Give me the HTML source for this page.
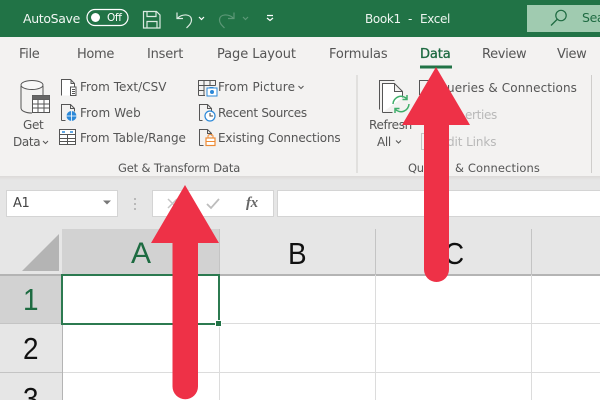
<!DOCTYPE html>
<html><head><meta charset="utf-8">
<style>
html,body{margin:0;padding:0;background:#fff}
#p{position:relative;width:600px;height:400px;overflow:hidden;background:#fff;font-family:"DejaVu Sans","Liberation Sans",sans-serif}
#p span.t{position:absolute;white-space:nowrap;line-height:16px;font-size:12px;color:#555;font-family:"DejaVu Sans",sans-serif;letter-spacing:-.35px;filter:blur(.25px)}
#p span.h{position:absolute;white-space:nowrap;line-height:30px;font-size:31px;color:#111;font-family:"Liberation Sans",sans-serif;transform-origin:0 0;transform:scaleX(.9)}
#p div{position:absolute}
svg{position:absolute;left:0;top:0}
</style></head><body>
<div id="p">
<div style="left:0;top:0;width:600px;height:37px;background:#217346"></div>
<div style="left:0;top:37px;width:600px;height:139px;background:#f3f2f1"></div>
<div style="left:0;top:176px;width:600px;height:4px;background:linear-gradient(#dcdad8,#e6e6e6)"></div>
<div style="left:0;top:180px;width:600px;height:49px;background:#e6e6e6"></div>
<div style="left:527px;top:5px;width:73px;height:27px;background:#a0cbb0"></div>

<!-- formula bar -->
<div style="left:6px;top:190px;width:110px;height:25px;background:#fff;border:1px solid #d4d4d4"></div>
<div style="left:152px;top:190px;width:120px;height:25px;background:#fff;border:1px solid #d4d4d4"></div>
<div style="left:277px;top:190px;width:323px;height:25px;background:#fff;border:1px solid #d4d4d4;border-right:0"></div>

<!-- headers -->
<div style="left:0;top:229px;width:600px;height:46px;background:#e6e6e6"></div>
<div style="left:62px;top:229px;width:157px;height:46px;background:#d2d2d2"></div>
<div style="left:0;top:275px;width:62px;height:48px;background:#d2d2d2"></div>
<div style="left:0;top:323px;width:62px;height:77px;background:#e6e6e6"></div>
<div style="left:0;top:274px;width:600px;height:1.5px;background:#b4b4b4"></div>
<div style="left:62px;top:275px;width:1px;height:125px;background:#b4b4b4"></div>
<div style="left:0;top:372px;width:62px;height:1px;background:#c4c4c4"></div>
<div style="left:0;top:323px;width:62px;height:1px;background:#c4c4c4"></div>
<div style="left:219px;top:229px;width:1px;height:46px;background:#c4c4c4"></div>
<div style="left:375px;top:229px;width:1px;height:46px;background:#c4c4c4"></div>
<div style="left:531px;top:229px;width:1px;height:46px;background:#c4c4c4"></div>
<!-- grid -->
<div style="left:63px;top:323px;width:537px;height:1px;background:#dcdcdc"></div>
<div style="left:63px;top:372px;width:537px;height:1px;background:#dcdcdc"></div>
<div style="left:219px;top:275px;width:1px;height:125px;background:#dcdcdc"></div>
<div style="left:375px;top:275px;width:1px;height:125px;background:#dcdcdc"></div>
<div style="left:531px;top:275px;width:1px;height:125px;background:#dcdcdc"></div>
<!-- selection -->
<div style="left:61px;top:274px;width:155px;height:47px;border:2px solid #2c7a50;background:#fff"></div>
<div style="left:215px;top:320px;width:7px;height:7px;background:#217346;border:1px solid #fff;box-sizing:border-box"></div>

<svg width="600" height="400" viewBox="0 0 600 400" fill="none">
<!-- titlebar -->
<rect x="87" y="9.500" width="41" height="16" rx="8" stroke="#fff" stroke-width="1.200"/>
<circle cx="95.500" cy="17.500" r="4.500" fill="#fff"/>
<g stroke="#dcebe2" stroke-width="1.200">
<path d="M143.500 11.500h13l3.500 3.500v13h-16.500z"/><path d="M147 11.500v5h9v-5M147 28v-6.500h10V28"/>
<path d="M177 12.500v6h6M177.500 18.500c4-5 14-5 14 1.500 0 3-2 5-5 8"/>
</g>
<path d="M199 17l2.500 2.500 2.500-2.500" stroke="#fff" stroke-width="1.200"/>
<g stroke="#5c9877" stroke-width="1.200"><path d="M234 12.500v6h-6M233.500 18.500c-4-5-14-5-14 1.500 0 3 2 5 5 8"/><path d="M243 17l2.500 2.500 2.500-2.500"/></g>
<path d="M267 15.500h6M267 18l3 2.500 3-2.500" stroke="#fff" stroke-width="1.200"/>
<circle cx="561" cy="15.500" r="5.200" stroke="#1f6b42" stroke-width="1.200"/><path d="M557 19.500l-6 6" stroke="#1f6b42" stroke-width="1.300"/>
<!-- data tab underline -->
<rect x="420" y="65.500" width="32" height="3" fill="#217346"/>
<!-- separators -->
<path d="M357 75v98M591.500 75v98" stroke="#cfcdcb"/>
<!-- Get Data icon -->
<g stroke="#555" stroke-width="1">
<path d="M21 86v22c0 3 5 5 11 5M43 86v9"/><ellipse cx="32" cy="85" rx="11" ry="4.500" fill="#f8f8f8"/>
<rect x="32.500" y="95.500" width="17" height="17" fill="#fff"/>
<path d="M32.500 99.500h17M32.500 104h17M32.500 108h17M38 99.500v13M44 99.500v13"/>
</g>
<rect x="32.500" y="95.500" width="17" height="4" fill="#666"/>
<!-- From Text/CSV -->
<g stroke="#555" stroke-width="1">
<path d="M61.500 95.500v-16h9l4 4v12h-1M71 79.500v4h3.500" fill="#fff"/><rect x="70.500" y="87" width="5.500" height="8.500" fill="#fff"/><path d="M72 89.500h3M72 91.500h3M72 93.500h3"/>
<path d="M61.500 120.500v-16h9l4 4v3M70.500 104.500v4h4M61.500 120.500h4"/>
</g>
<circle cx="71.500" cy="116" r="5" fill="#2b88d8"/><path d="M66.500 116h10M71.500 111v10" stroke="#fff" stroke-width=".8"/>
<!-- From table -->
<g stroke="#555" stroke-width="1"><rect x="59.500" y="129.500" width="16" height="15" fill="#fff"/><path d="M59.500 134.500h16M59.500 138.500h16M59.500 141.500h16M67.500 134.500v10"/></g>
<path d="M62 132h3M70 132h3" stroke="#2b88d8" stroke-width="1.500"/>
<!-- From Picture -->
<g stroke="#555" stroke-width="1"><path d="M198.500 95.500v-15h17v5M198.500 85.500h17M198.500 90.500h6M204 80.500v15h1M210 80.500v5M198.500 95.500h5"/></g>
<rect x="207" y="88" width="10" height="8" fill="#fff" stroke="#2b88d8"/><circle cx="212" cy="92" r="2" fill="#2b88d8"/><path d="M209.500 87.500h4" stroke="#2b88d8"/>
<!-- Recent Sources -->
<g stroke="#555" stroke-width="1"><path d="M199.500 120.500v-16h8l4 4v3M207.500 104.500v4h4M199.500 120.500h3"/></g>
<circle cx="210" cy="116" r="5" fill="#fff" stroke="#2b88d8" stroke-width="1.200"/><path d="M210 113v3h3" stroke="#444"/>
<!-- Existing Connections -->
<g stroke="#555" stroke-width="1"><path d="M199.500 145.500v-16h8l4 4v2M207.500 129.500v4h4M199.500 145.500h4"/></g>
<rect x="206" y="138" width="9" height="7.500" fill="#fff" stroke="#ed8b36" stroke-width="1.200"/><path d="M208 138v-2c0-2 5-2 5 0v2" stroke="#ed8b36"/><path d="M206 141.500h9" stroke="#ed8b36"/>
<!-- Refresh All -->
<g stroke="#555" stroke-width="1">
<path d="M379.500 109.500V80.500h15"/>
<path d="M382.500 112.500V83.500h12l8 8v6M394.500 83.500v8h8M382.500 112.500h10" fill="#fff"/>
</g>
<g stroke="#3fae6a" stroke-width="1.500"><path d="M393 104a8 8 0 0 1 14-5M409 104a8 8 0 0 1-14 5"/><path d="M407 95v4.500h-4.500M395 113v-4.500h4.500"/></g>
<!-- Queries -->
<path d="M419.500 95V80.500h14" stroke="#555"/><rect x="421.500" y="133.500" width="12" height="16" stroke="#c4c4c4"/>
<path d="M418.500 108h10v11h-10z" stroke="#c8c8c8"/>
<!-- chevrons -->
<path d="M43 141l2.500 2.500L48 141M298.500 86l2.500 2.500 2.500-2.500M396 140.500l2.500 2.500 2.500-2.500" stroke="#555"/>
<!-- namebox arrow, grip -->
<path d="M103 200.500h8l-4 4z" fill="#777"/>
<path d="M135 198v2M135 203v2M135 208v2" stroke="#aaa" stroke-width="1.500"/>
<!-- x check -->
<path d="M168 199l9 9M177 199l-9 9" stroke="#c4c4c4" stroke-width="1.500"/>
<path d="M207 204l4 4 8-9" stroke="#bdbdbd" stroke-width="1.800"/>
<!-- corner triangle -->
<path d="M59 234v37H22z" fill="#b4b4b4"/>
</svg>

<span class="t" style="left:23px;top:11px;color:#f2f7f4;font-size:12.500px">AutoSave</span>
<span class="t" style="left:107px;top:10px;color:#fff;font-size:10.500px">Off</span>
<span class="t" style="left:365px;top:11px;color:#eef5f0;font-size:12px">Book1</span>
<span class="t" style="left:408px;top:11px;color:#eef5f0;font-size:12px">-</span>
<span class="t" style="left:420px;top:11px;color:#eef5f0;font-size:12px">Excel</span>
<span class="t" style="left:582px;top:10px;color:#1f6b42;font-size:12.500px">Sea</span>

<span class="t" style="left:19px;top:47px;font-size:13px">File</span>
<span class="t" style="left:77px;top:47px;font-size:13px">Home</span>
<span class="t" style="left:147px;top:47px;font-size:13px;letter-spacing:-.2px">Insert</span>
<span class="t" style="left:217px;top:47px;font-size:13px;letter-spacing:-.08px">Page Layout</span>
<span class="t" style="left:329px;top:47px;font-size:13px;letter-spacing:-.1px">Formulas</span>
<span class="t" style="left:420px;top:47px;font-size:13px;color:#1f6b42;-webkit-text-stroke:.3px #1f6b42;letter-spacing:-.1px">Data</span>
<span class="t" style="left:482px;top:47px;font-size:13px">Review</span>
<span class="t" style="left:557px;top:47px;font-size:13px">View</span>

<span class="t" style="left:23px;top:117px">Get</span>
<span class="t" style="left:13px;top:134px">Data</span>
<span class="t" style="left:80px;top:79px;letter-spacing:.03px">From Text/CSV</span>
<span class="t" style="left:80px;top:105px;letter-spacing:.15px">From Web</span>
<span class="t" style="left:80px;top:130px;letter-spacing:-.05px">From Table/Range</span>
<span class="t" style="left:218px;top:79px;letter-spacing:.2px">From Picture</span>
<span class="t" style="left:218px;top:105px;letter-spacing:-.28px">Recent Sources</span>
<span class="t" style="left:218px;top:130px;letter-spacing:-.15px">Existing Connections</span>
<span class="t" style="left:118px;top:160px;font-size:11.500px;letter-spacing:-.15px">Get &amp; Transform Data</span>
<span class="t" style="left:369px;top:117px">Refresh</span>
<span class="t" style="left:377px;top:134px">All</span>
<span class="t" style="left:447px;top:80px;letter-spacing:.1px">ueries &amp; Connections</span>
<span class="t" style="left:465px;top:107px;color:#b8b8b8">erties</span>
<span class="t" style="left:447px;top:134px;color:#b8b8b8;letter-spacing:-.1px">dit Links</span>
<span class="t" style="left:408px;top:160px;font-size:11.500px">Qu</span>
<span class="t" style="left:455px;top:160px;font-size:11.500px;letter-spacing:.1px">&amp; Connections</span>

<span class="t" style="left:13px;top:196px;font-size:13px;color:#444">A1</span>
<span class="t" style="left:246px;top:195px;font-size:15px;font-family:'Liberation Serif',serif;font-style:italic;font-weight:bold;color:#666">fx</span>

<span class="h" style="left:131px;top:239px;color:#1d6b41;transform:none;font-size:30px">A</span>
<span class="h" style="left:288px;top:239px">B</span>
<span class="h" style="left:444px;top:239px">C</span>
<span class="h" style="left:23px;top:285px;color:#1d6b41">1</span>
<span class="h" style="left:23px;top:334px">2</span>
<span class="h" style="left:23px;top:384px">3</span>

<svg width="600" height="400" viewBox="0 0 600 400" fill="none">
<!-- arrows -->
<path d="M185 185l34 58h-21v143.500a12.750 12.750 0 0 1-25.500 0V243h-21.500z" fill="#ee3147"/>
<path d="M436 67l34 58h-21v144.500a12.500 12.500 0 0 1-25 0V125h-22z" fill="#ee3147"/>
</svg>
</div>
</body></html>
